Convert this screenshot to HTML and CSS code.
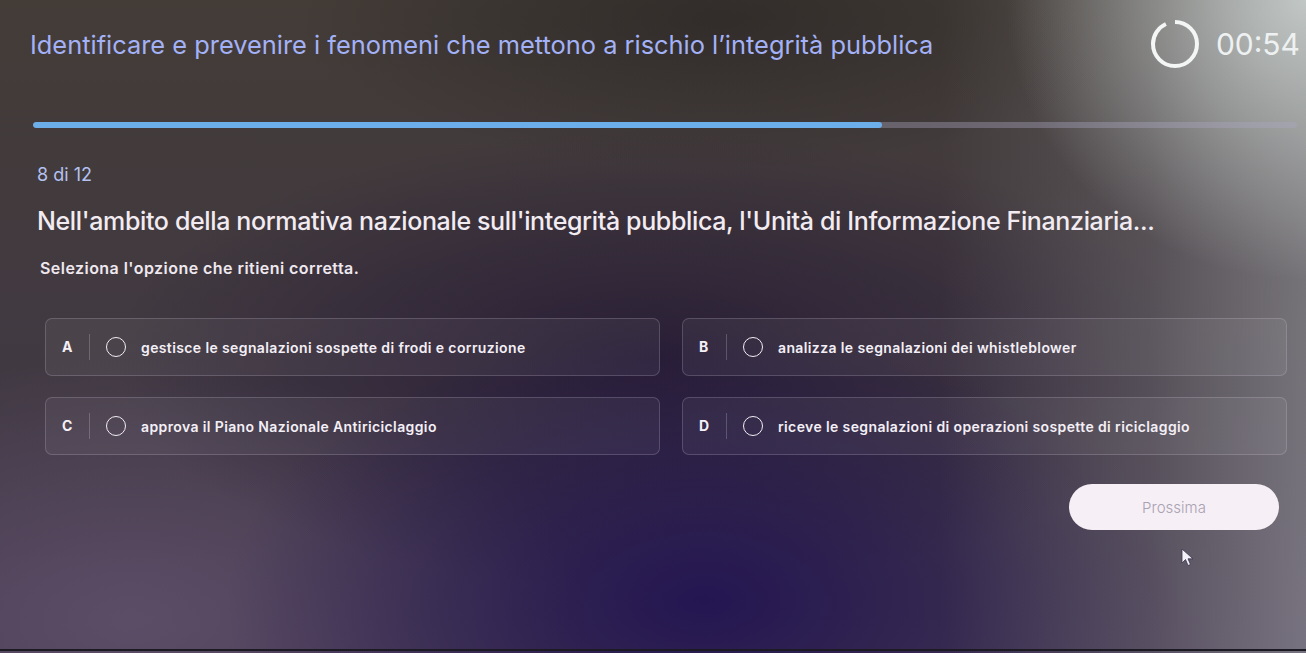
FILE: index.html
```html
<!DOCTYPE html>
<html lang="it">
<head>
<meta charset="utf-8">
<title>Quiz</title>
<link rel="stylesheet" href="styles.css">
</head>
<body>
<div class="screen">
  <header class="topbar">
    <h1 class="course-title">Identificare e prevenire i fenomeni che mettono a rischio l’integrità pubblica</h1>
    <div class="timer">
      <svg class="timer-ring" width="50" height="50" viewBox="0 0 50 50">
        <circle cx="25" cy="25" r="22" fill="none" stroke="#f4f6f6" stroke-width="4" stroke-dasharray="128 10" transform="rotate(-90 25 25)"/>
      </svg>
      <span class="timer-text">00:54</span>
    </div>
  </header>

  <div class="progress"><div class="progress-fill" style="width:67.2%"></div></div>

  <main class="content">
    <p class="counter">8 di 12</p>
    <h2 class="question">Nell'ambito della normativa nazionale sull'integrità pubblica, l'Unità di Informazione Finanziaria...</h2>
    <p class="hint">Seleziona l'opzione che ritieni corretta.</p>

    <div class="options">
      <div class="option">
        <span class="opt-letter">A</span>
        <span class="opt-radio"></span>
        <span class="opt-text">gestisce le segnalazioni sospette di frodi e corruzione</span>
      </div>
      <div class="option">
        <span class="opt-letter">B</span>
        <span class="opt-radio"></span>
        <span class="opt-text">analizza le segnalazioni dei whistleblower</span>
      </div>
      <div class="option">
        <span class="opt-letter">C</span>
        <span class="opt-radio"></span>
        <span class="opt-text">approva il Piano Nazionale Antiriciclaggio</span>
      </div>
      <div class="option">
        <span class="opt-letter">D</span>
        <span class="opt-radio"></span>
        <span class="opt-text">riceve le segnalazioni di operazioni sospette di riciclaggio</span>
      </div>
    </div>

    <div class="actions">
      <button class="next-btn" type="button">Prossima</button>
    </div>
  </main>

  <svg class="cursor" width="14" height="20" viewBox="0 0 14 20">
    <path d="M1 1 L1 15 L4.5 11.5 L7 17.5 L9.5 16.5 L7 10.8 L12 10.8 Z" fill="#f4f2f6" stroke="#3a3450" stroke-width="0.8"/>
  </svg>
</div>
</body>
</html>
```

FILE: styles.css
```css
* { box-sizing: border-box; }

html, body {
  margin: 0;
  padding: 0;
  width: 1306px;
  height: 653px;
  overflow: hidden;
}

body {
  font-family: Inter, "Noto Sans", "DejaVu Sans", sans-serif;
  background-color: #3f3935;
  background-image:
    radial-gradient(ellipse 300px 280px at 100% 0%, rgba(212,220,218,0.8), rgba(212,220,218,0) 100%),
    linear-gradient(to right, rgba(0,0,0,0) 72%, rgba(140,140,146,0.28) 88%, rgba(170,172,176,0.5) 100%),
    radial-gradient(ellipse 480px 270px at 54% 92%, rgba(34,20,82,0.95), rgba(34,20,82,0) 100%),
    radial-gradient(ellipse 540px 230px at 50% 55%, rgba(34,22,50,0.78), rgba(34,22,50,0) 100%),
    radial-gradient(ellipse 460px 260px at 10% 95%, rgba(102,86,114,0.7), rgba(102,86,114,0) 100%),
    radial-gradient(ellipse 420px 150px at 55% 3%, rgba(32,29,28,0.5), rgba(32,29,28,0) 100%),
    linear-gradient(to bottom, #433c37 0%, #413943 60%, #45394f 100%);
}

.screen {
  position: relative;
  width: 1306px;
  height: 651px;
  border-bottom: 2px solid #1c1a22;
}

.topbar {
  display: flex;
  align-items: center;
  justify-content: space-between;
  height: 88px;
  padding: 0 6px 0 30px;
}

.course-title {
  margin: 0;
  font-size: 25.4px;
  font-weight: 400;
  letter-spacing: 0;
  color: #a3b1f6;
}

.timer {
  display: flex;
  align-items: center;
  gap: 16px;
}

.timer-ring { display: block; }

.timer-text {
  font-size: 30px;
  font-weight: 400;
  color: #eef1f1;
  letter-spacing: 0;
}

.progress {
  margin: 34px 9px 0 33px;
  height: 6px;
  border-radius: 3px;
  background: rgba(170,168,195,0.38);
  overflow: hidden;
}

.progress-fill {
  height: 100%;
  border-radius: 3px;
  background: #6caeea;
}

.content {
  padding: 0 19px 0 37px;
}

.counter {
  margin: 36px 0 0;
  font-size: 18px;
  line-height: 22px;
  color: #b4c1f1;
}

.question {
  margin: 20px 0 0;
  font-size: 25px;
  line-height: 30px;
  font-weight: 500;
  letter-spacing: -0.36px;
  color: #f2ecf2;
}

.hint {
  margin: 22px 0 0 3px;
  font-size: 16px;
  line-height: 20px;
  font-weight: 600;
  letter-spacing: 0.45px;
  color: #efe8ef;
}

.options {
  display: grid;
  grid-template-columns: 615px 605px;
  column-gap: 22px;
  row-gap: 21px;
  margin: 40px 0 0 8px;
}

.option {
  display: flex;
  align-items: center;
  height: 58px;
  padding-left: 16px;
  border: 1px solid rgba(225,215,235,0.2);
  border-radius: 7px;
  background: rgba(255,255,255,0.05);
}

.opt-letter {
  width: 28px;
  height: 26px;
  line-height: 26px;
  text-align: left;
  font-size: 14px;
  font-weight: 700;
  color: #f4f0f6;
  border-right: 1px solid rgba(255,255,255,0.2);
}

.opt-radio {
  width: 20px;
  height: 20px;
  margin-left: 16px;
  border: 1.7px solid #f2eef4;
  border-radius: 50%;
  flex: none;
}

.opt-text {
  margin-left: 15px;
  font-size: 14px;
  font-weight: 600;
  letter-spacing: 0.38px;
  color: #f4eff6;
}

.actions {
  display: flex;
  justify-content: flex-end;
  margin-top: 29px;
  padding-right: 8px;
}

.next-btn {
  width: 210px;
  height: 46px;
  border: none;
  border-radius: 23px;
  background: #f6eff6;
  font-family: inherit;
  font-size: 15px;
  font-weight: 300;
  color: #a9a2b2;
}

.cursor {
  position: absolute;
  left: 1181px;
  top: 548px;
}
```
